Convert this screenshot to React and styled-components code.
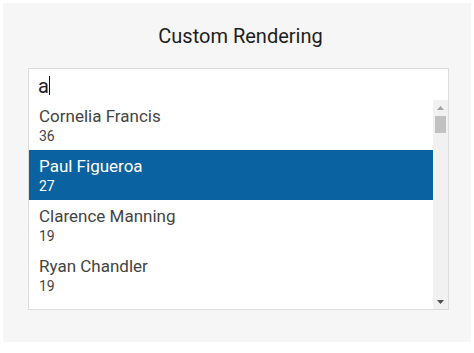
import React from "react";
import styled, { createGlobalStyle } from "styled-components";

const GlobalStyle = createGlobalStyle`
    body {
        margin: 0;
        background: #ffffff;
        font-family: Roboto, "Liberation Sans", sans-serif;
    }
`;

const people = [
    { name: "Cornelia Francis", age: 36 },
    { name: "Paul Figueroa", age: 27, selected: true },
    { name: "Clarence Manning", age: 19 },
    { name: "Ryan Chandler", age: 19 },
];

const Page = styled.div`
    padding: 3px 3px 11px 3px;
`;

const Panel = styled.div`
    background: #f6f6f6;
    height: 339px;
    box-sizing: border-box;
    padding: 21px 22px 0 25px;
    display: flex;
    flex-direction: column;
`;

const Title = styled.h2`
    margin: 0 0 20px 0;
    font-size: 20px;
    line-height: 24px;
    font-weight: 400;
    color: #1d1d1d;
    text-align: center;
    padding-left: 4px;
`;

const Combo = styled.div`
    background: #ffffff;
    border: 1px solid #dcdcdc;
    width: 421px;
    box-sizing: border-box;
`;

const InputRow = styled.div`
    height: 31px;
    padding: 2px 10px 0 9px;
    box-sizing: border-box;
    display: flex;
    align-items: center;
    font-size: 20px;
    color: #222;
`;

const Caret = styled.span`
    display: inline-block;
    width: 1px;
    height: 19px;
    background: #111;
`;

const ListWrap = styled.div`
    display: flex;
    height: 209px;
`;

const List = styled.div`
    flex: 1;
    overflow: hidden;
`;

const Item = styled.div`
    height: 50px;
    box-sizing: border-box;
    padding: 5px 10px 0 10px;
    background: ${(p) => (p.$selected ? "#0b62a0" : "transparent")};
    color: ${(p) => (p.$selected ? "#ffffff" : "#444444")};
`;

const Name = styled.div`
    font-size: 17px;
    line-height: 22px;
`;

const Age = styled.div`
    font-size: 14px;
    line-height: 19px;
`;

const ScrollBar = styled.div`
    width: 15px;
    background: #f1f1f1;
    display: flex;
    flex-direction: column;
    align-items: center;
`;

const Arrow = styled.div`
    height: 15px;
    display: flex;
    align-items: center;
    justify-content: center;
    flex: none;
`;

const Thumb = styled.div`
    width: 11px;
    height: 17px;
    background: #c1c1c1;
    margin-top: 1px;
`;

const Spacer = styled.div`
    flex: 1;
`;

function Combobox() {
    return (
        <Combo>
            <InputRow>
                a<Caret />
            </InputRow>
            <ListWrap>
                <List>
                    {people.map((it) => (
                        <Item key={it.name} $selected={it.selected}>
                            <Name>{it.name}</Name>
                            <Age>{it.age}</Age>
                        </Item>
                    ))}
                </List>
                <ScrollBar>
                    <Arrow>
                        <svg width="7" height="4" viewBox="0 0 7 4">
                            <path d="M3.5 0 L7 4 L0 4 Z" fill="#a3a3a3" />
                        </svg>
                    </Arrow>
                    <Thumb />
                    <Spacer />
                    <Arrow>
                        <svg width="7" height="4" viewBox="0 0 7 4">
                            <path d="M0 0 L7 0 L3.5 4 Z" fill="#505050" />
                        </svg>
                    </Arrow>
                </ScrollBar>
            </ListWrap>
        </Combo>
    );
}

export default function App() {
    return (
        <>
            <GlobalStyle />
            <Page>
                <Panel>
                    <Title>Custom Rendering</Title>
                    <Combobox />
                </Panel>
            </Page>
        </>
    );
}
